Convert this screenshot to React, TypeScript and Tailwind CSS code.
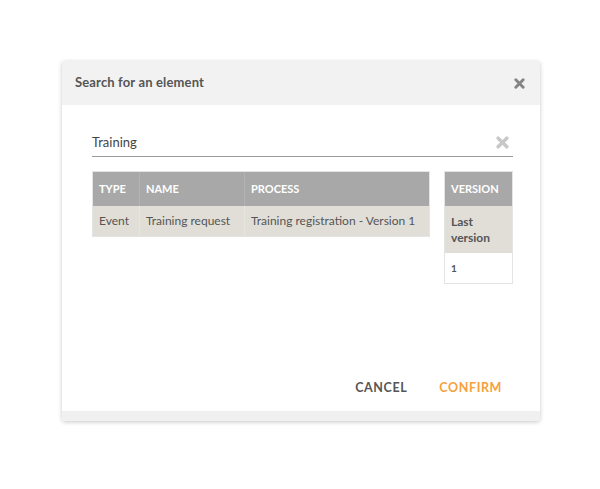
const CrossIcon = ({ size, color }: { size: number; color: string }) => (
  <svg width={size} height={size} viewBox="0 0 12 12" fill="none">
    <path d="M2 2L10 10M10 2L2 10" stroke={color} strokeWidth="3.2" strokeLinecap="round" />
  </svg>
);

const columns = [
  { label: "TYPE", width: "w-[46px]" },
  { label: "NAME", width: "w-[105px]" },
  { label: "PROCESS", width: "flex-1" },
];

const row = ["Event", "Training request", "Training registration - Version 1"];

export default function App() {
  return (
    <div className="min-h-screen bg-white pt-[61px] pl-[62px] font-['Lato','Open_Sans',sans-serif]">
      <div className="flex h-[360px] w-[478px] flex-col overflow-hidden rounded-[3px] bg-white shadow-[0_1px_4px_rgba(0,0,0,0.22)]">
        {/* header */}
        <div className="flex h-[44px] items-center justify-between bg-[#f2f2f2] pl-[13px] pr-[15px]">
          <span className="text-[13px] font-bold tracking-[0.15px] text-[#555]">Search for an element</span>
          <CrossIcon size={11} color="#858585" />
        </div>

        {/* body */}
        <div className="flex flex-1 flex-col pl-[30px] pr-[27px] pt-[24px]">
          <div className="flex h-[28px] items-center justify-between border-b border-[#9a9a9a] pr-[4px]">
            <span className="text-[13px] text-[#444]">Training</span>
            <CrossIcon size={13} color="#c8c8c8" />
          </div>

          <div className="mt-[14px] flex items-start gap-[14px]">
            <div className="flex w-[338px] flex-col border border-[#e4e4e4]">
              <div className="flex h-[34px] bg-[#a8a8a8]">
                {columns.map((c, i) => (
                  <div
                    key={c.label}
                    className={`${c.width} flex items-center pl-[6px] text-[11px] font-bold text-white ${i > 0 ? "border-l border-[#b3b3b3]" : ""}`}
                  >
                    {c.label}
                  </div>
                ))}
              </div>
              <div className="flex h-[30px] bg-[#e1ded8]">
                {row.map((cell, i) => (
                  <div
                    key={cell}
                    className={`${columns[i].width} flex items-center pl-[6px] text-[12px] text-[#555] ${i > 0 ? "border-l border-[#e8e5e0]" : ""}`}
                  >
                    {cell}
                  </div>
                ))}
              </div>
            </div>

            <div className="flex w-[69px] flex-col border border-[#e4e4e4]">
              <div className="flex h-[34px] items-center bg-[#a8a8a8] pl-[6px] text-[11px] font-bold text-white">
                VERSION
              </div>
              <div className="flex h-[47px] items-center bg-[#e1ded8] pl-[6px] text-[12px] font-bold leading-[16px] text-[#555]">
                Last
                <br />
                version
              </div>
              <div className="flex h-[30px] items-center bg-white pl-[6px] text-[10px] font-bold text-[#555]">
                1
              </div>
            </div>
          </div>

          <div className="mt-auto mb-[8px] flex h-[30px] items-center justify-end gap-[32px] pr-[11px]">
            <button className="text-[12.5px] font-bold tracking-[0.6px] text-[#555]">CANCEL</button>
            <button className="text-[12.5px] font-bold tracking-[0.6px] text-[#f7a13c]">CONFIRM</button>
          </div>
        </div>

        {/* footer strip */}
        <div className="h-[10px] bg-[#f0f0f0]" />
      </div>
    </div>
  );
}
